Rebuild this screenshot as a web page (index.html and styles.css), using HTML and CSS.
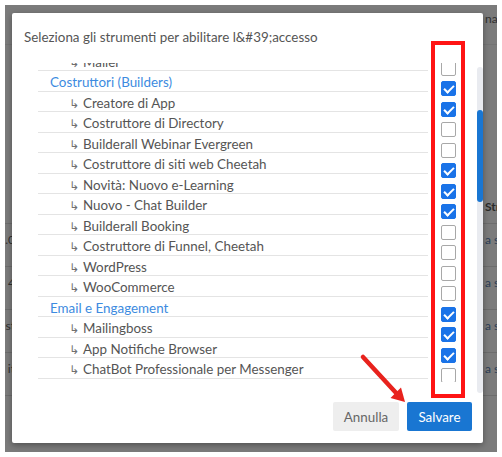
FILE: index.html
```html
<!DOCTYPE html>
<html lang="it">
<head>
<meta charset="utf-8">
<title>Seleziona strumenti</title>
<link rel="stylesheet" href="styles.css">
</head>
<body>
<div class="screen">
  <div class="overlay">
    <div class="backdrop">
      <div class="bd-row bd-head"><span class="bd-l"></span><span class="bd-r">naz</span></div>
      <div class="bd-gap"></div>
      <div class="bd-row bd-th"><span class="bd-l"></span><span class="bd-r strong">Str</span></div>
      <div class="bd-row bd-tr"><span class="bd-l">1.0</span><span class="bd-r link">a s</span></div>
      <div class="bd-row bd-tr"><span class="bd-l">4</span><span class="bd-r link">a s</span></div>
      <div class="bd-row bd-tr"><span class="bd-l">st</span><span class="bd-r link">a s</span></div>
      <div class="bd-row bd-tr"><span class="bd-l">it</span><span class="bd-r link">a s</span></div>
    </div>

    <div class="modal">
      <div class="modal-title">Seleziona gli strumenti per abilitare l&amp;#39;accesso</div>
      <div class="modal-body">
        <div class="list-viewport">
          <div class="list">
            <div class="row"><div class="label item"><span class="arr">↳</span>Mailer</div><div class="cb"></div></div>
            <div class="row"><div class="label cat">Costruttori (Builders)</div><div class="cb on"></div></div>
            <div class="row"><div class="label item"><span class="arr">↳</span>Creatore di App</div><div class="cb on"></div></div>
            <div class="row"><div class="label item"><span class="arr">↳</span>Costruttore di Directory</div><div class="cb"></div></div>
            <div class="row"><div class="label item"><span class="arr">↳</span>Builderall Webinar Evergreen</div><div class="cb"></div></div>
            <div class="row"><div class="label item"><span class="arr">↳</span>Costruttore di siti web Cheetah</div><div class="cb on"></div></div>
            <div class="row"><div class="label item"><span class="arr">↳</span>Novità: Nuovo e-Learning</div><div class="cb on"></div></div>
            <div class="row"><div class="label item"><span class="arr">↳</span>Nuovo - Chat Builder</div><div class="cb on"></div></div>
            <div class="row"><div class="label item"><span class="arr">↳</span>Builderall Booking</div><div class="cb"></div></div>
            <div class="row"><div class="label item"><span class="arr">↳</span>Costruttore di Funnel, Cheetah</div><div class="cb"></div></div>
            <div class="row"><div class="label item"><span class="arr">↳</span>WordPress</div><div class="cb"></div></div>
            <div class="row"><div class="label item"><span class="arr">↳</span>WooCommerce</div><div class="cb"></div></div>
            <div class="row"><div class="label cat">Email e Engagement</div><div class="cb on"></div></div>
            <div class="row"><div class="label item"><span class="arr">↳</span>Mailingboss</div><div class="cb on"></div></div>
            <div class="row"><div class="label item"><span class="arr">↳</span>App Notifiche Browser</div><div class="cb on"></div></div>
            <div class="row"><div class="label item"><span class="arr">↳</span>ChatBot Professionale per Messenger</div><div class="cb"></div></div>
            <div class="row"><div class="label item"><span class="arr">↳</span>Builderall Tools</div><div class="cb"></div></div>
          </div>
        </div>
        <div class="scrollbar"><div class="thumb"></div></div>
      </div>
      <div class="modal-footer">
        <button class="btn btn-cancel">Annulla</button>
        <button class="btn btn-save">Salvare</button>
      </div>
    </div>
  </div>
</div>

<div class="annot-box"></div>
<svg class="annot-arrow" width="60" height="60" viewBox="0 0 60 60">
  <line x1="8" y1="7" x2="43" y2="45" stroke="#e8221d" stroke-width="4.5" stroke-linecap="round"/>
  <polygon points="50,52 35.5,48 46,37.5" fill="#e8221d"/>
</svg>
</body>
</html>
```

FILE: styles.css
```css
* { box-sizing: border-box; }

html, body {
  margin: 0;
  padding: 0;
  background: #ffffff;
  font-family: Lato, "Liberation Sans", sans-serif;
}

.screen {
  padding: 5px;
  width: 502px;
  height: 457px;
}

.overlay {
  width: 492px;
  height: 447px;
  background: #7b7b7b;
  overflow: hidden;
  display: grid;
  grid-template: 1fr / 1fr;
}

.backdrop,
.modal {
  grid-area: 1 / 1;
}

/* page behind the overlay */
.backdrop {
  display: flex;
  flex-direction: column;
  font-size: 12px;
  color: #2f2f2f;
}

.bd-row {
  display: flex;
  align-items: flex-start;
  border-bottom: 1px solid #6c6c6c;
}

.bd-head { height: 40px; padding-top: 6px; border-bottom-color: #737373; }
.bd-gap { height: 145px; }
.bd-th { height: 34px; padding-top: 9px; }
.bd-tr { height: 43px; padding-top: 8px; }

.bd-l {
  width: 10px;
  display: flex;
  justify-content: flex-end;
  white-space: nowrap;
}

.bd-r {
  margin-left: auto;
  width: 12px;
  white-space: nowrap;
}

.bd-r.strong { font-weight: 700; color: #2a2a2a; }
.bd-r.link { color: #2c3e57; }

/* modal */
.modal {
  margin: 8px 14px 9px 7px;
  background: #ffffff;
  border-radius: 2px;
  box-shadow: 0 2px 6px rgba(0, 0, 0, 0.35);
  display: flex;
  flex-direction: column;
}

.modal-title {
  padding: 16px 12px 0;
  font-size: 13.4px;
  line-height: 16px;
  color: #555555;
}

.modal-body {
  margin-top: 18px;
  margin-left: 26px;
  height: 319px;
  display: flex;
}

.list-viewport {
  width: 418px;
  height: 319px;
  overflow: hidden;
}

.list {
  margin-top: -12.5px;
}

.row {
  display: flex;
  align-items: flex-start;
  height: 20.5px;
}

.label {
  width: 390px;
  height: 20.5px;
  border-bottom: 1px solid #e4e4e4;
  font-size: 13.4px;
  line-height: 20px;
  padding-top: 1px;
  white-space: nowrap;
}

.label.cat {
  padding-left: 12px;
  color: #3d8be0;
}

.label.item {
  padding-left: 31px;
  color: #555555;
}

.arr {
  display: inline-block;
  width: 14px;
  font-family: "DejaVu Sans", sans-serif;
  font-size: 12px;
  color: #707070;
}

.cb {
  flex: none;
  margin-left: 13px;
  margin-top: 10px;
  width: 15px;
  height: 15px;
  border: 1.5px solid #a8a8a8;
  border-radius: 2px;
  background: #ffffff;
  position: relative;
}

.cb.on {
  background: #1a73e8;
  border-color: #1a73e8;
}

.cb.on::after {
  content: "";
  position: absolute;
  left: 4px;
  top: 1px;
  width: 4px;
  height: 8px;
  border: solid #ffffff;
  border-width: 0 2.5px 2.5px 0;
  transform: rotate(45deg);
}

.scrollbar {
  margin: 4px 0 -11px 21px;
  width: 6px;
  border-radius: 3px;
  background: #e9ebf0;
  padding-top: 43px;
}

.thumb {
  width: 6px;
  height: 92px;
  border-radius: 3px;
  background: #1976d2;
}

.modal-footer {
  margin-top: 20px;
  padding: 0 11px 12px 0;
  display: flex;
  justify-content: flex-end;
  gap: 8px;
}

.btn {
  height: 29px;
  border: none;
  border-radius: 2px;
  font-family: Lato, "Liberation Sans", sans-serif;
  font-size: 13.4px;
  padding: 0;
}

.btn-cancel {
  width: 66px;
  background: #eeeeee;
  color: #666666;
}

.btn-save {
  width: 65px;
  background: #1976d2;
  color: #ffffff;
}

/* annotations drawn over the screenshot */
.annot-box {
  position: absolute;
  left: 431px;
  top: 41px;
  width: 34px;
  height: 357px;
  border: 4px solid #ff1414;
}

.annot-arrow {
  position: absolute;
  left: 355px;
  top: 350px;
}
```
